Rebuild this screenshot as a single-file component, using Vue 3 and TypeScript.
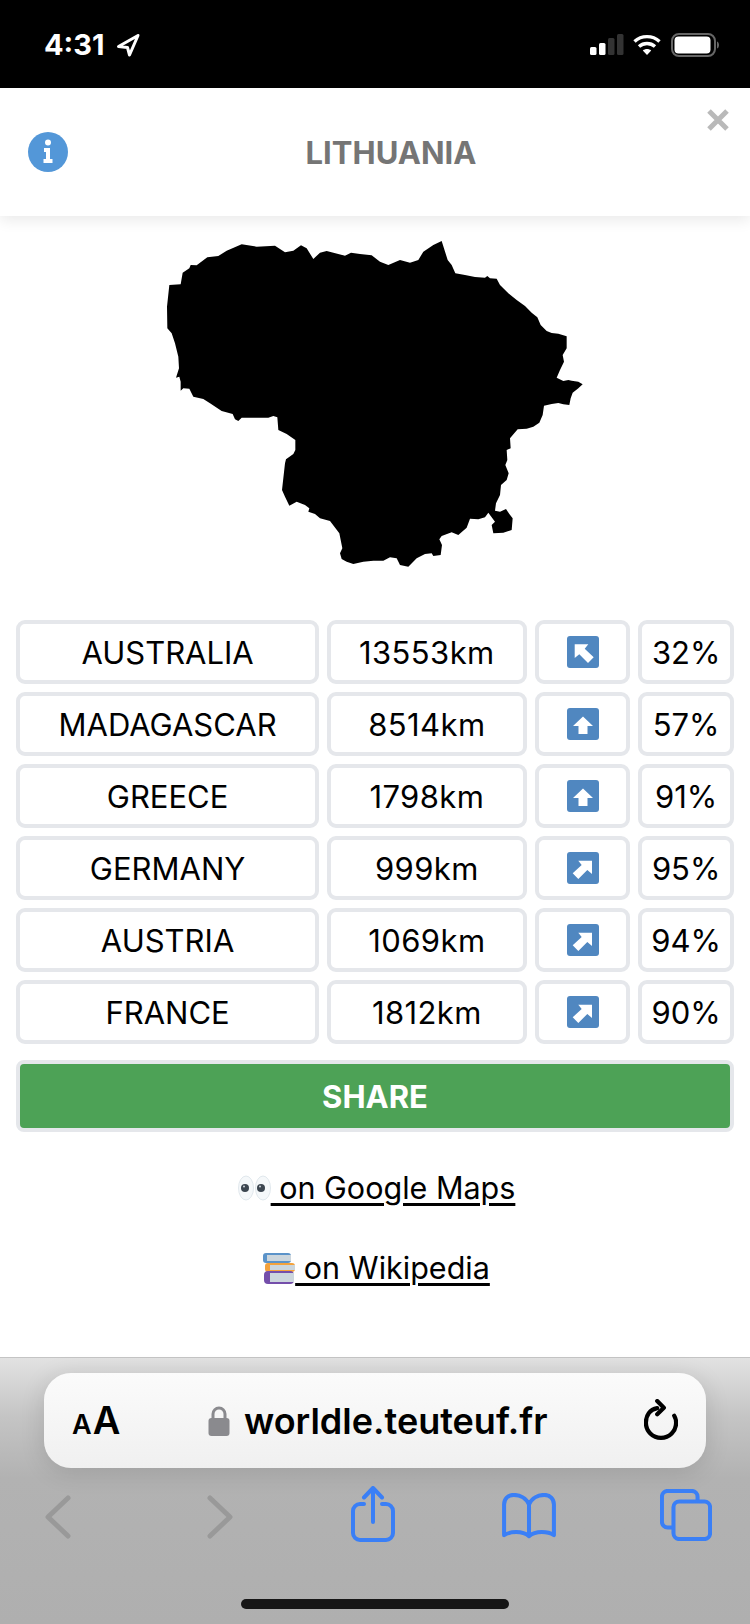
<script setup lang="ts">
interface Guess { name: string; dist: string; dir: 'nw' | 'n' | 'ne'; pct: string }
const guesses: Guess[] = [
  { name: 'AUSTRALIA', dist: '13553km', dir: 'nw', pct: '32%' },
  { name: 'MADAGASCAR', dist: '8514km', dir: 'n', pct: '57%' },
  { name: 'GREECE', dist: '1798km', dir: 'n', pct: '91%' },
  { name: 'GERMANY', dist: '999km', dir: 'ne', pct: '95%' },
  { name: 'AUSTRIA', dist: '1069km', dir: 'ne', pct: '94%' },
  { name: 'FRANCE', dist: '1812km', dir: 'ne', pct: '90%' },
]
const arrows: Record<Guess['dir'], string> = {
  n: '16,8.500 26,18 20.500,18 20.500,26 11.500,26 11.500,18 6,18',
  nw: '7.700,8.300 21.300,8.300 17.700,12.700 26.700,21.300 21,27 12.300,18.300 7.700,22',
  ne: '25,8.700 11.300,8.700 14.700,13 5.700,21.300 11.300,27 20.300,18 25,22',
}
const outline = 'M875,33 893,90 905,105 916,130 945,135 975,141 1005,143 1012,138 1020,145 1040,146 1050,165 1075,190 1100,210 1125,228 1145,248 1162,262 1172,285 1190,303 1205,309 1225,311 1250,319 1250,355 1238,375 1242,395 1230,420 1220,443 1240,453 1255,450 1265,452 1285,455 1298,463 1285,475 1268,488 1262,505 1258,525 1240,523 1225,519 1205,522 1182,527 1178,555 1168,578 1150,590 1130,596 1103,598 1080,625 1082,655 1070,660 1072,690 1066,705 1076,730 1070,750 1053,765 1050,795 1038,820 1035,842 1050,845 1068,837 1078,852 1088,865 1085,900 1060,908 1030,910 1025,885 1035,875 1015,848 1005,862 985,868 960,866 950,893 925,915 905,907 875,918 868,928 876,945 872,975 850,978 845,970 825,972 800,985 775,1010 750,1005 740,985 720,982 700,992 670,992 640,995 610,1002 590,995 575,987 570,970 577,955 568,910 540,873 510,865 495,852 475,845 478,835 465,825 440,815 418,827 405,800 396,780 405,700 408,688 430,672 436,660 436,630 410,612 385,600 382,562 370,558 355,563 275,563 265,573 255,568 248,552 215,543 180,520 160,507 130,500 118,476 100,475 92,482 92,455 88,440 78,443 87,415 85,380 75,340 65,310 52,295 51,230 58,165 92,163 98,128 118,115 122,105 140,106 172,82 205,78 230,62 275,43 320,50 375,47 405,67 430,62 453,46 470,55 490,87 510,68 530,63 585,77 603,68 630,72 665,76 690,95 715,105 750,90 780,98 805,90 820,65 850,45Z'
</script>

<template>
  <div class="page">
    <div class="status">
      <span class="time">4:31</span>
      <svg class="loc" width="24" height="24" viewBox="0 0 24 24"><path d="M22 2.500 2.500 13.500 11.500 14.500 13.500 22z" fill="none" stroke="#fff" stroke-width="3" stroke-linejoin="round"/></svg>
      <svg class="signal" width="34" height="22" viewBox="0 0 34 22">
        <rect x="0" y="13" width="6.500" height="8" rx="1.500" fill="#fff"/>
        <rect x="9" y="9" width="6.500" height="12" rx="1.500" fill="#fff"/>
        <rect x="18" y="4" width="6.500" height="17" rx="1.500" fill="#333"/>
        <rect x="27" y="0" width="6.500" height="21" rx="1.500" fill="#333"/>
      </svg>
      <svg class="wifi" width="28" height="22" viewBox="0 0 28 22" fill="none" stroke="#fff" stroke-width="3.400">
        <path d="M1.500 7.500C8.500 1 19.500 1 26.500 7.500"/>
        <path d="M6 12.500C10.500 8.500 17.500 8.500 22 12.500"/>
        <path d="M14 21 9.800 16.600C12.200 14.600 15.800 14.600 18.200 16.600Z" fill="#fff" stroke="none"/>
      </svg>
      <svg class="battery" width="48" height="24" viewBox="0 0 48 24">
        <rect x="1" y="1" width="43" height="22" rx="7" fill="none" stroke="#666" stroke-width="2"/>
        <rect x="3.500" y="3.500" width="36" height="17" rx="4" fill="#fff"/>
        <path d="M46 8.500c1.500.5 2 2 2 3.500s-.5 3-2 3.500z" fill="#666"/>
      </svg>
    </div>

    <header class="head">
      <svg class="info" width="40" height="40" viewBox="0 0 40 40">
        <circle cx="20" cy="20" r="20" fill="#5397d8"/>
        <circle cx="20" cy="10.500" r="3" fill="#fff"/>
        <path d="M16 16h6v11h2.500v4h-9v-4H18v-7h-2z" fill="#fff"/>
      </svg>
      <h1 class="title">LITHUANIA</h1>
      <svg class="close" width="22" height="22" viewBox="0 0 22 22"><path d="M2 2 20 20M20 2 2 20" stroke="#b9b9b9" stroke-width="5"/></svg>
    </header>

    <main class="main">
      <svg class="map" width="450" height="350" viewBox="0 0 1350 1050"><path :d="outline" fill="#000"/></svg>

      <div class="grid">
        <template v-for="g in guesses" :key="g.name">
          <div class="cell wide">{{ g.name }}</div>
          <div class="cell mid">{{ g.dist }}</div>
          <div class="cell dir">
            <svg width="32" height="32" viewBox="0 0 32 32">
              <rect width="32" height="32" rx="3" fill="#5087c0"/>
              <polygon :points="arrows[g.dir]" fill="#fff"/>
            </svg>
          </div>
          <div class="cell">{{ g.pct }}</div>
        </template>
      </div>

      <button class="share">SHARE</button>

      <a class="link first">
        <svg width="33" height="26" viewBox="0 0 33 26">
          <ellipse cx="8" cy="13" rx="7.500" ry="12" fill="#f5f8fa" stroke="#e1e8ed"/>
          <ellipse cx="25" cy="13" rx="7.500" ry="12" fill="#f5f8fa" stroke="#e1e8ed"/>
          <circle cx="7" cy="13" r="4" fill="#3c4650"/>
          <circle cx="23" cy="13" r="4" fill="#3c4650"/>
          <circle cx="6" cy="11.500" r="1" fill="#cfd6dc"/>
          <circle cx="22" cy="11.500" r="1" fill="#cfd6dc"/>
        </svg>
        <span class="label">&nbsp;on Google Maps</span>
      </a>
      <a class="link second">
        <svg width="32" height="31" viewBox="0 0 32 31">
          <rect x="0" y="0" width="28" height="10" rx="3" fill="#5b93c9"/>
          <rect x="4" y="2" width="24" height="6" fill="#ccd6dd"/>
          <rect x="2" y="10" width="30" height="9" rx="3" fill="#f4a23c"/>
          <rect x="7" y="12" width="25" height="5" fill="#ccd6dd"/>
          <rect x="1" y="18" width="30" height="13" rx="4" fill="#744eaa"/>
          <rect x="7" y="20" width="24" height="9" fill="#ccd6dd"/>
        </svg>
        <span class="label">&nbsp;on Wikipedia</span>
      </a>
    </main>

    <footer class="chrome">
      <div class="address">
        <span class="aa"><span class="small">A</span><span class="big">A</span></span>
        <svg class="lock" width="22" height="30" viewBox="0 0 22 30">
          <path d="M5 13V8a6 6 0 0 1 12 0v5" fill="none" stroke="#8a8a8e" stroke-width="3"/>
          <rect x="0.500" y="12" width="21" height="18" rx="3" fill="#8a8a8e"/>
        </svg>
        <span class="url">worldle.teuteuf.fr</span>
        <svg class="reload" width="34" height="42" viewBox="0 0 36 44" fill="none" stroke="#000" stroke-width="4.500" stroke-linecap="round" stroke-linejoin="round">
          <path d="M14 9.500C6 11 2 17 2 25a16 16 0 1 0 32 0c0-3-.5-5-2-7.500"/>
          <path d="M14 2 21 9 14 16"/>
        </svg>
      </div>
      <div class="tools">
        <svg class="back" width="26" height="44" viewBox="0 0 26 44" fill="none" stroke="#999" stroke-width="5" stroke-linecap="round" stroke-linejoin="round"><path d="M23 3 3 22 23 41"/></svg>
        <svg class="forward" width="26" height="44" viewBox="0 0 26 44" fill="none" stroke="#999" stroke-width="5" stroke-linecap="round" stroke-linejoin="round"><path d="M3 3 23 22 3 41"/></svg>
        <svg class="up" width="44" height="56" viewBox="0 0 44 56" fill="none" stroke="#3a7ff6" stroke-width="4" stroke-linecap="round" stroke-linejoin="round">
          <path d="M31 18h4a7 7 0 0 1 7 7v22a7 7 0 0 1-7 7H9a7 7 0 0 1-7-7V25a7 7 0 0 1 7-7h4"/>
          <path d="M22 36V3M13 11.500 22 2 31 11.500"/>
        </svg>
        <svg class="book" width="54" height="46" viewBox="0 0 56 48" fill="none" stroke="#3a7ff6" stroke-width="4.200" stroke-linecap="round" stroke-linejoin="round">
          <path d="M28 12C25 5 18 2 12 2 6 2 2 6 2 12v32c6-4 19-5 26 1 7-6 20-5 26-1V12c0-6-4-10-10-10-6 0-13 3-16 10zM28 12v33"/>
        </svg>
        <svg class="tabs" width="52" height="52" viewBox="0 0 54 54" fill="none" stroke="#3a7ff6" stroke-width="4.200" stroke-linejoin="round">
          <path d="M15 40H8a6 6 0 0 1-6-6V8a6 6 0 0 1 6-6h25a6 6 0 0 1 6 6v5"/>
          <rect x="14" y="13" width="38" height="39" rx="6"/>
        </svg>
      </div>
      <div class="home"></div>
    </footer>
  </div>
</template>

<style>
html, body { margin: 0; padding: 0; background: #fff; }
</style>

<style scoped>
.page {
  width: 750px;
  height: 1624px;
  display: flex;
  flex-direction: column;
  overflow: hidden;
  background: #fff;
  font-family: Inter, "Liberation Sans", sans-serif;
  color: #000;
}
.status {
  height: 88px;
  flex: none;
  background: #000;
  display: flex;
  align-items: flex-start;
  padding: 33px 31px 0 44px;
  box-sizing: border-box;
}
.time {
  color: #fff;
  font-size: 29px;
  line-height: 24px;
  font-weight: 700;
  width: 62px;
}
.loc { margin-left: 10px; }
.signal { margin-left: auto; margin-top: 1px; }
.wifi { margin-left: 9px; margin-top: 1px; }
.battery { margin-left: 10px; }
.head {
  height: 128px;
  flex: none;
  position: relative;
  z-index: 1;
  background: #fff;
  box-shadow: 0 4px 14px rgba(0, 0, 0, 0.09);
  display: flex;
  align-items: center;
  justify-content: center;
  padding: 2px 0 0 32px;
  box-sizing: border-box;
}
.info { position: absolute; left: 28px; top: 44px; }
.close { position: absolute; right: 21px; top: 21px; }
.title {
  margin: 0;
  font-size: 31px;
  line-height: 40px;
  font-weight: 700;
  color: #757575;
}
.main {
  flex: 1;
  padding: 14px 16px 0;
  display: flex;
  flex-direction: column;
  align-items: center;
  min-height: 0;
}
.map { display: block; flex: none; }
.grid {
  margin-top: 40px;
  width: 718px;
  display: grid;
  grid-template-columns: repeat(7, 1fr);
  gap: 8px;
}
.cell {
  height: 64px;
  box-sizing: border-box;
  border: 4px solid #e5e7eb;
  border-radius: 9px;
  display: flex;
  align-items: center;
  justify-content: center;
  font-size: 31px;
  padding-top: 1px;
}
.wide { grid-column: span 3; }
.mid { grid-column: span 2; letter-spacing: 0.4px; }
.dir { padding: 0 0 0 2px; }
.share {
  margin-top: 16px;
  width: 718px;
  height: 72px;
  flex: none;
  box-sizing: border-box;
  border: 4px solid #e5e7eb;
  border-radius: 8px;
  background: #4da256;
  color: #fff;
  font-family: inherit;
  font-size: 31px;
  font-weight: 700;
  padding: 0;
}
.link {
  display: flex;
  align-items: center;
  font-size: 30.500px;
  line-height: 40px;
  color: #000;
  padding-left: 3px;
}
.first { margin-top: 36px; }
.second { margin-top: 40px; }
.label { text-decoration: underline; text-underline-offset: 4px; text-decoration-thickness: 2.500px; }
.chrome {
  height: 267px;
  flex: none;
  box-sizing: border-box;
  border-top: 1.500px solid #c4c4c4;
  background: linear-gradient(#e2e2e2 0, #c4c4c4 60px, #b2b2b2 120px, #afafaf 100%);
  position: relative;
  padding-top: 15px;
}
.address {
  margin-left: 44px;
  width: 662px;
  height: 95px;
  box-sizing: border-box;
  border-radius: 27px;
  background: linear-gradient(#fbfbfb, #f0f0f0);
  box-shadow: 0 4px 24px rgba(0, 0, 0, 0.13);
  display: flex;
  align-items: center;
  padding-left: 28px;
}
.aa {
  display: flex;
  align-items: baseline;
  width: 46px;
  margin-top: 4px;
  font-weight: 600;
  color: #000;
}
.small { font-size: 27px; line-height: 38px; }
.big { font-size: 38px; line-height: 38px; margin-left: 1px; }
.lock { margin-left: 90px; }
.url {
  margin-left: 14px;
  width: 305px;
  font-size: 36px;
  font-weight: 600;
  white-space: nowrap;
}
.reload { margin-left: 95px; margin-top: -2px; }
.tools {
  margin-top: 18px;
  display: flex;
  align-items: flex-start;
  padding-left: 45px;
}
.back { margin-top: 9px; }
.forward { margin-top: 9px; margin-left: 136px; }
.up { margin-left: 118px; }
.book { margin-left: 107px; margin-top: 7px; }
.tabs { margin-left: 104px; margin-top: 3px; }
.home {
  position: absolute;
  left: 241px;
  top: 241px;
  width: 268px;
  height: 10px;
  border-radius: 5px;
  background: #161616;
}
</style>
